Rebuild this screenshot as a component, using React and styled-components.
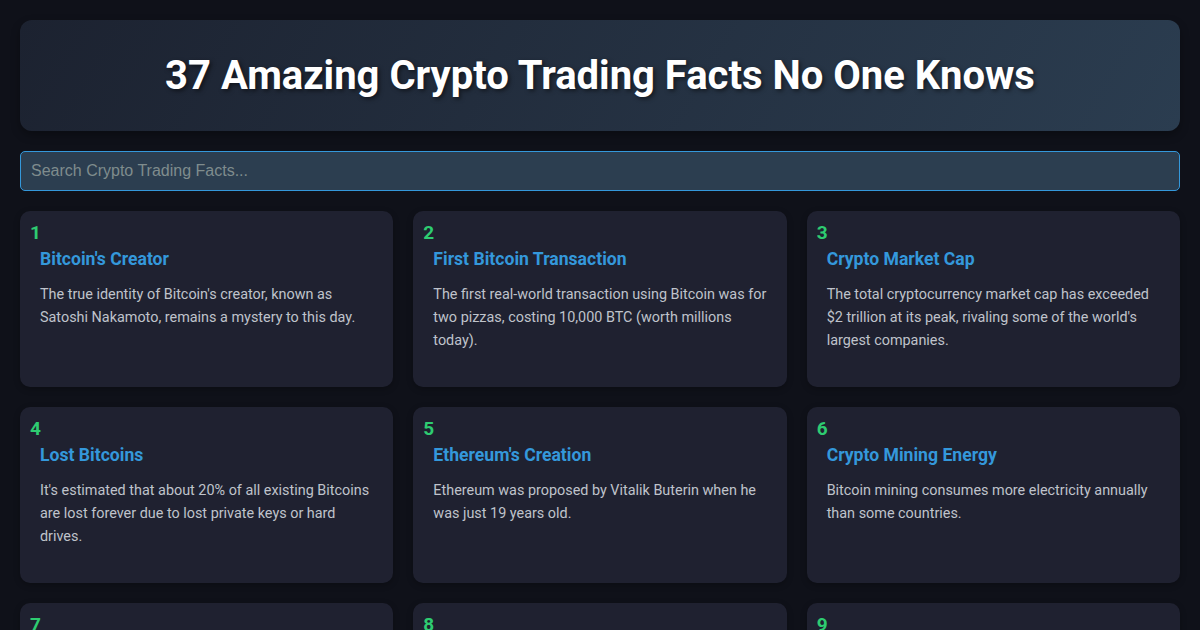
import styled, { createGlobalStyle } from "styled-components";

const GlobalStyle = createGlobalStyle`
  body {
    margin: 0;
    background: #0f1119;
    font-family: Roboto, "Liberation Sans", Arial, sans-serif;
    color: #c2c6ce;
  }
`;

const facts = [
  {
    title: "Bitcoin's Creator",
    text: "The true identity of Bitcoin's creator, known as Satoshi Nakamoto, remains a mystery to this day.",
  },
  {
    title: "First Bitcoin Transaction",
    text: "The first real-world transaction using Bitcoin was for two pizzas, costing 10,000 BTC (worth millions today).",
  },
  {
    title: "Crypto Market Cap",
    text: "The total cryptocurrency market cap has exceeded $2 trillion at its peak, rivaling some of the world's largest companies.",
  },
  {
    title: "Lost Bitcoins",
    text: "It's estimated that about 20% of all existing Bitcoins are lost forever due to lost private keys or hard drives.",
  },
  {
    title: "Ethereum's Creation",
    text: "Ethereum was proposed by Vitalik Buterin when he was just 19 years old.",
  },
  {
    title: "Crypto Mining Energy",
    text: "Bitcoin mining consumes more electricity annually than some countries.",
  },
  {
    title: "Crypto Exchanges",
    text: "There are hundreds of cryptocurrency exchanges operating worldwide, each with its own fees and listings.",
  },
  {
    title: "Altcoins",
    text: "Thousands of alternative cryptocurrencies, known as altcoins, have been created since Bitcoin.",
  },
  {
    title: "Blockchain Halving",
    text: "Bitcoin's block reward is cut in half roughly every four years in an event called the halving.",
  },
];

const Page = styled.div`
  padding: 20px;
  display: flex;
  flex-direction: column;
  gap: 20px;
`;

const Header = styled.header`
  padding: 32px 20px;
  border-radius: 12px;
  background: linear-gradient(120deg, #1c2230 0%, #2b3d50 100%);
  box-shadow: 0 4px 10px rgba(0, 0, 0, 0.3);
  text-align: center;
`;

const Title = styled.h1`
  margin: 0;
  font-size: 40px;
  font-weight: 700;
  color: #ffffff;
  text-shadow: 2px 2px 4px rgba(0, 0, 0, 0.5);
`;

const Search = styled.input`
  display: block;
  width: 100%;
  box-sizing: border-box;
  height: 40px;
  padding: 10px;
  font-family: "Liberation Sans", Arial, sans-serif;
  font-size: 16px;
  color: #ecf0f1;
  background: #2c3e50;
  border: 1px solid #3498db;
  border-radius: 5px;
  outline: none;

  &::placeholder {
    color: #7f8c8d;
  }
`;

const Grid = styled.div`
  display: grid;
  grid-template-columns: repeat(3, 1fr);
  gap: 20px;
`;

const Card = styled.article`
  padding: 11px 20px 20px;
  border-radius: 10px;
  background: #1f2130;
  box-shadow: 0 2px 6px rgba(0, 0, 0, 0.25);
`;

const Number = styled.div`
  margin-left: -10px;
  font-size: 19px;
  line-height: 22px;
  font-weight: 700;
  color: #2ecc71;
`;

const FactTitle = styled.h3`
  margin: 5px 0 13px;
  font-size: 17.6px;
  line-height: 21px;
  font-weight: 700;
  color: #3498db;
`;

const FactText = styled.p`
  margin: 0 0 15px;
  font-size: 14.4px;
  line-height: 23px;
  color: #bfc3cb;
`;

export default function App() {
  return (
    <>
      <GlobalStyle />
      <Page>
        <Header>
          <Title>37 Amazing Crypto Trading Facts No One Knows</Title>
        </Header>
        <Search type="text" placeholder="Search Crypto Trading Facts..." />
        <Grid>
          {facts.map((fact, i) => (
            <Card key={fact.title}>
              <Number>{i + 1}</Number>
              <FactTitle>{fact.title}</FactTitle>
              <FactText>{fact.text}</FactText>
            </Card>
          ))}
        </Grid>
      </Page>
    </>
  );
}
